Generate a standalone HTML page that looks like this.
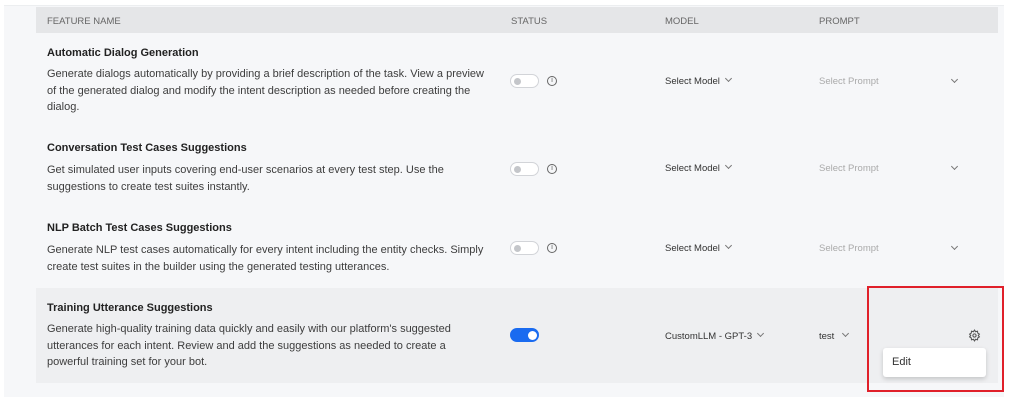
<!DOCTYPE html>
<html><head><style>
*{margin:0;padding:0;box-sizing:border-box}
body{width:1024px;height:405px;background:#fff;font-family:"Liberation Sans",sans-serif;position:relative;overflow:hidden;color:#333}
.wrap{position:absolute;left:4px;top:5px;width:1000px;height:392px;background:#f6f7f9;border-top:1px solid #eceef0}
.hd{position:absolute;left:36px;top:7px;width:962px;height:26px;background:#e5e6e8;font-size:9.5px;color:#666}
.hd span{position:absolute;top:9px}
.a{position:absolute}
.t{font-size:11px;font-weight:bold;color:#222}
.d{font-size:11px;line-height:16.5px;color:#3d3d3d;width:470px;white-space:nowrap}
.tog{position:absolute;width:29px;height:14px;border:1px solid #d2d4d8;border-radius:8px;background:#fff}
.tog::after{content:"";position:absolute;left:3px;top:3px;width:7px;height:7px;border-radius:50%;background:#c4c6ca}
.on{background:#1a6bf0;border-color:#1a6bf0}
.on::after{left:17px;top:2px;width:9px;height:9px;background:#fff}
.info{position:absolute;width:10px;height:10px;border:1px solid #666;border-radius:50%;font-size:7px;line-height:8px;text-align:center;color:#555}
.s{font-size:9.5px;color:#333}
.p{font-size:9.5px;color:#aaa}
.chev{display:inline-block;width:5px;height:5px;border-right:1px solid #777;border-bottom:1px solid #777;transform:rotate(45deg);margin-left:6px;position:relative;top:-3px}
</style></head><body>
<div class="wrap"></div>
<div class="hd"><span style="left:11px">FEATURE NAME</span><span style="left:475px">STATUS</span><span style="left:629px">MODEL</span><span style="left:783px">PROMPT</span></div>

<div class="a t" style="left:47px;top:47px">Automatic Dialog Generation</div>
<div class="a d" style="left:47px;top:66px">Generate dialogs automatically by providing a brief description of the task. View a preview<br>of the generated dialog and modify the intent description as needed before creating the<br>dialog.</div>
<div class="tog" style="left:510px;top:74px"></div><div class="info" style="left:547px;top:76px">i</div>
<div class="a s" style="left:665px;top:76px">Select Model<span class="chev"></span></div>
<div class="a p" style="left:819px;top:76px">Select Prompt</div><div class="a" style="left:946px;top:72px"><span class="chev"></span></div>

<div class="a t" style="left:47px;top:142px">Conversation Test Cases Suggestions</div>
<div class="a d" style="left:47px;top:162px">Get simulated user inputs covering end-user scenarios at every test step. Use the<br>suggestions to create test suites instantly.</div>
<div class="tog" style="left:510px;top:162px"></div><div class="info" style="left:547px;top:164px">i</div>
<div class="a s" style="left:665px;top:163px">Select Model<span class="chev"></span></div>
<div class="a p" style="left:819px;top:163px">Select Prompt</div><div class="a" style="left:946px;top:159px"><span class="chev"></span></div>

<div class="a t" style="left:47px;top:222px">NLP Batch Test Cases Suggestions</div>
<div class="a d" style="left:47px;top:242px">Generate NLP test cases automatically for every intent including the entity checks. Simply<br>create test suites in the builder using the generated testing utterances.</div>
<div class="tog" style="left:510px;top:241px"></div><div class="info" style="left:547px;top:243px">i</div>
<div class="a s" style="left:665px;top:243px">Select Model<span class="chev"></span></div>
<div class="a p" style="left:819px;top:243px">Select Prompt</div><div class="a" style="left:946px;top:239px"><span class="chev"></span></div>

<div class="a" style="left:36px;top:288px;width:962px;height:95px;background:#eeeff1"></div>
<div class="a t" style="left:47px;top:302px">Training Utterance Suggestions</div>
<div class="a d" style="left:47px;top:321px">Generate high-quality training data quickly and easily with our platform's suggested<br>utterances for each intent. Review and add the suggestions as needed to create a<br>powerful training set for your bot.</div>
<div class="tog on" style="left:510px;top:328px"></div>
<div class="a s" style="left:665px;top:331px">CustomLLM - GPT-3<span class="chev"></span></div>
<div class="a s" style="left:819px;top:331px">test<span class="chev" style="margin-left:9px"></span></div>
<svg class="a" style="left:968px;top:329px" width="13" height="13" viewBox="0 0 24 24" fill="none" stroke="#555" stroke-width="2"><circle cx="12" cy="12" r="3"/><path d="M12 2l2 3 3.5-1 .5 3.5 3 2-2 2.5 2 2.5-3 2-.5 3.5-3.5-1-2 3-2-3-3.5 1-.5-3.5-3-2 2-2.5-2-2.5 3-2 .5-3.5 3.5 1z"/></svg>
<div class="a" style="left:883px;top:348px;width:103px;height:29px;background:#fff;border-radius:3px;box-shadow:0 2px 5px rgba(0,0,0,.18);font-size:11px;padding:8px 9px;color:#333">Edit</div>
<div class="a" style="left:867px;top:286px;width:137px;height:106px;border:2px solid #e0202a"></div>
</body></html>
